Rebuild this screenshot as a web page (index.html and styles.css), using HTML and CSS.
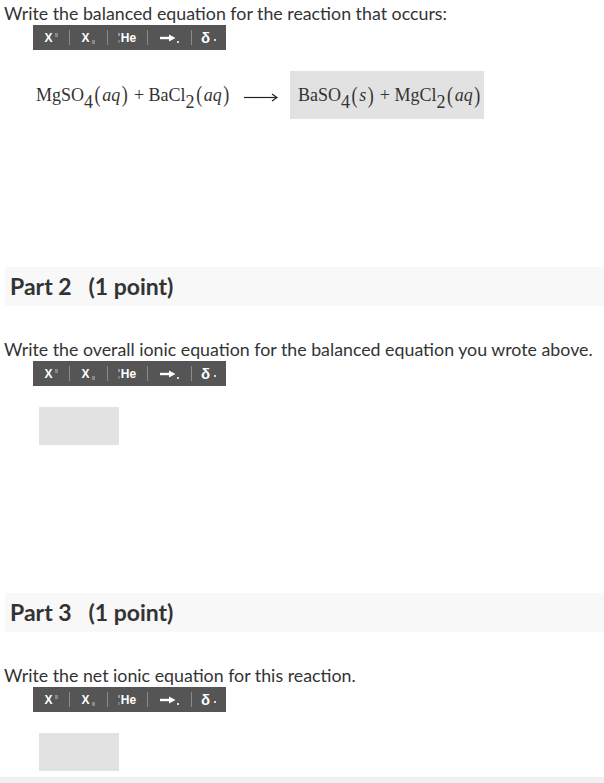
FILE: index.html
```html
<!DOCTYPE html>
<html lang="en">
<head>
    <meta charset="UTF-8">
    <title>Chemical equations</title>
    <link rel="stylesheet" href="styles.css">
</head>
<body>
    <div class="part part-first">
        <div class="prompt">Write the balanced equation for the reaction that occurs:</div>
        <div class="toolbar">
            <span class="tool tool-sup">X<i class="mark"></i></span>
            <span class="tool tool-sub">X<i class="mark"></i></span>
            <span class="tool tool-iso"><i class="mark"></i>He</span>
            <span class="tool tool-arrow"><svg width="16" height="10" viewBox="0 0 16 10"><path d="M0 5H11" stroke="#fff" stroke-width="2.4"/><path d="M9 1.5L15.5 5L9 8.5Z" fill="#fff"/></svg><i class="dot"></i></span>
            <span class="tool tool-delta">&delta;<i class="dot"></i></span>
        </div>
        <div class="equation">
            <span class="formula">MgSO<sub>4</sub><span class="paren">(</span><em>aq</em><span class="paren">)</span> + BaCl<sub>2</sub><span class="paren">(</span><em>aq</em><span class="paren">)</span></span>
            <svg class="arrow" width="34" height="10" viewBox="0 0 34 10">
                <path d="M0 5.5H32" stroke="#222" stroke-width="1.2" fill="none"/>
                <path d="M28 2L33 5.5L28 9" stroke="#222" stroke-width="1.2" fill="none"/>
            </svg>
            <span class="answer answer-filled">BaSO<sub>4</sub><span class="paren">(</span><em>s</em><span class="paren">)</span> + MgCl<sub>2</sub><span class="paren">(</span><em>aq</em><span class="paren">)</span></span>
        </div>
    </div>

    <div class="part">
        <div class="part-header">Part 2 &nbsp; (1 point)</div>
        <div class="prompt">Write the overall ionic equation for the balanced equation you wrote above.</div>
        <div class="toolbar">
            <span class="tool tool-sup">X<i class="mark"></i></span>
            <span class="tool tool-sub">X<i class="mark"></i></span>
            <span class="tool tool-iso"><i class="mark"></i>He</span>
            <span class="tool tool-arrow"><svg width="16" height="10" viewBox="0 0 16 10"><path d="M0 5H11" stroke="#fff" stroke-width="2.4"/><path d="M9 1.5L15.5 5L9 8.5Z" fill="#fff"/></svg><i class="dot"></i></span>
            <span class="tool tool-delta">&delta;<i class="dot"></i></span>
        </div>
        <div class="answer-row">
            <span class="answer answer-empty"></span>
        </div>
    </div>

    <div class="part part-last">
        <div class="part-header">Part 3 &nbsp; (1 point)</div>
        <div class="prompt">Write the net ionic equation for this reaction.</div>
        <div class="toolbar">
            <span class="tool tool-sup">X<i class="mark"></i></span>
            <span class="tool tool-sub">X<i class="mark"></i></span>
            <span class="tool tool-iso"><i class="mark"></i>He</span>
            <span class="tool tool-arrow"><svg width="16" height="10" viewBox="0 0 16 10"><path d="M0 5H11" stroke="#fff" stroke-width="2.4"/><path d="M9 1.5L15.5 5L9 8.5Z" fill="#fff"/></svg><i class="dot"></i></span>
            <span class="tool tool-delta">&delta;<i class="dot"></i></span>
        </div>
        <div class="answer-row">
            <span class="answer answer-empty"></span>
        </div>
    </div>

    <div class="footer-strip"></div>
</body>
</html>
```

FILE: styles.css
```css
html, body {
    overflow: hidden;
}

body {
    margin: 0;
    padding: 0 0 0 5px;
    font-family: Lato, 'Liberation Sans', sans-serif;
    color: #333;
    background: #fff;
}

.part {
    margin-bottom: 148px;
}

.part-first {
    padding-top: 3px;
}

.part-last {
    margin-bottom: 6px;
}

.prompt {
    font-size: 17.8px;
    line-height: 20px;
    margin-left: -1px;
}

.part-header {
    background: #f8f8f8;
    height: 39px;
    line-height: 39px;
    padding-left: 5px;
    font-size: 23px;
    font-weight: bold;
    margin-bottom: 33px;
    white-space: pre;
}

/* панель инструментов */
.toolbar {
    display: flex;
    align-items: center;
    width: 193px;
    height: 25px;
    margin: 2px 0 0 28px;
    background: #555;
    color: #fff;
    font-family: 'Liberation Sans', Arial, sans-serif;
    font-weight: bold;
    font-size: 12px;
}

.tool {
    position: relative;
    display: flex;
    align-items: center;
    justify-content: center;
    height: 25px;
}

.tool + .tool::before {
    content: '';
    position: absolute;
    left: 0;
    top: 5px;
    height: 15px;
    border-left: 1px solid #8a8a8a;
}

.tool-sup { width: 36px; }
.tool-sub { width: 38px; }
.tool-iso { width: 40px; }
.tool-arrow { width: 44px; }
.tool-delta { width: 35px; }

.mark {
    display: inline-block;
    width: 3px;
    height: 4px;
    background: #888;
}

.tool-sup .mark {
    margin: -6px 0 0 2px;
}

.tool-sub .mark {
    margin: 8px 0 0 2px;
}

.tool-iso .mark {
    height: 10px;
    width: 2px;
    margin-right: 1px;
    background: linear-gradient(#999 0 3px, transparent 3px 7px, #777 7px);
}

.tool-delta {
    font-size: 15px;
}

.dot {
    display: inline-block;
    width: 2px;
    height: 2px;
    background: #ddd;
    margin: 8px 0 0 1px;
}

.tool-delta .dot {
    margin: 4px 0 0 4px;
}

/* уравнение */
.equation {
    display: flex;
    align-items: center;
    margin: 21px 0 0 0;
    height: 48px;
    font-family: 'Liberation Serif', 'Times New Roman', serif;
    font-size: 18px;
    color: #333;
}

.formula {
    margin-left: 31px;
}

.equation em {
    font-style: italic;
}

.equation sub {
    font-size: 18px;
    vertical-align: -7px;
    line-height: 0;
}

.paren {
    display: inline-block;
    transform: scaleY(1.25);
    margin: 0 1.6px;
}

.arrow {
    margin: 4px 12px 0 13px;
}

.answer {
    display: inline-block;
    background: #e2e2e2;
}

.answer-filled {
    height: 48px;
    width: 194px;
    line-height: 48px;
    box-sizing: border-box;
    padding-left: 8px;
}

.answer-row {
    margin: 21px 0 0 34px;
    height: 38px;
}

.answer-empty {
    width: 80px;
    height: 38px;
}

.footer-strip {
    height: 10px;
    margin-left: -5px;
    background: #f0f0f0;
}
```
